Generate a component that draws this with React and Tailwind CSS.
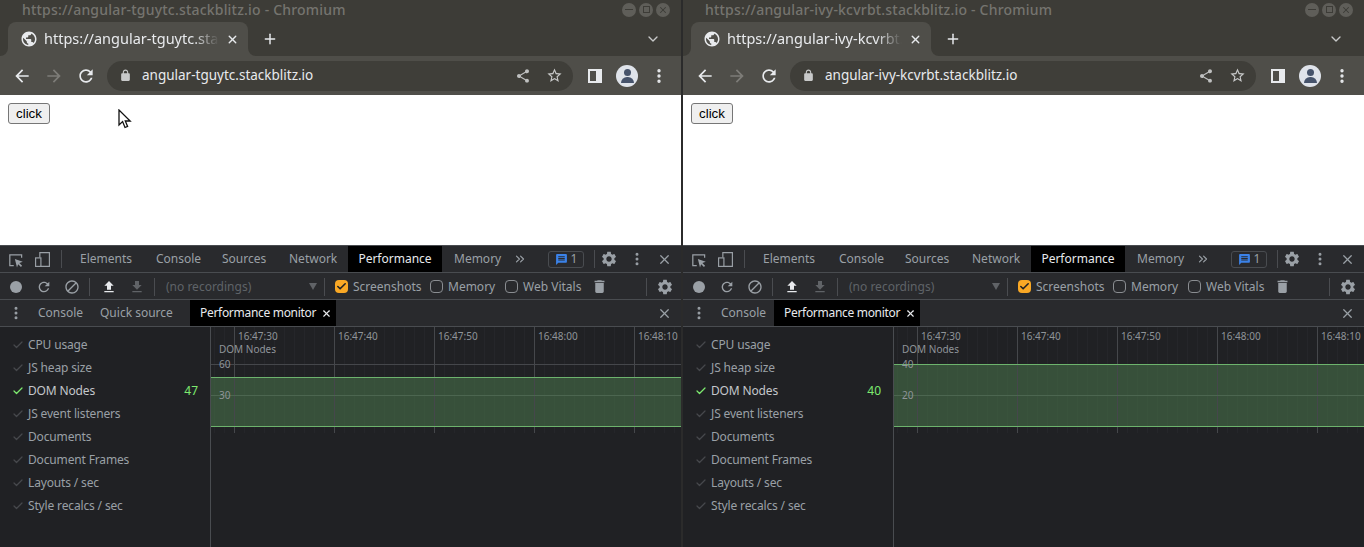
import { EllipsisVertical, X, Plus, ChevronDown, ChevronsRight, Check } from 'lucide-react'

const paths = {
  globe: 'M12 2C6.48 2 2 6.48 2 12s4.48 10 10 10 10-4.48 10-10S17.52 2 12 2zm-1 17.93c-3.95-.49-7-3.85-7-7.93 0-.62.08-1.21.21-1.79L9 15v1c0 1.1.9 2 2 2v1.93zm6.9-2.54c-.26-.81-1-1.39-1.9-1.39h-1v-3c0-.55-.45-1-1-1H8v-2h2c.55 0 1-.45 1-1V7h2c1.1 0 2-.9 2-2v-.41c2.93 1.19 5 4.06 5 7.41 0 2.08-.8 3.97-2.1 5.39z',
  back: 'M20 11H7.83l5.59-5.59L12 4l-8 8 8 8 1.41-1.41L7.83 13H20v-2z',
  forward: 'M4 11h12.17l-5.59-5.59L12 4l8 8-8 8-1.41-1.41L16.17 13H4v-2z',
  refresh: 'M17.65 6.35C16.2 4.9 14.21 4 12 4c-4.42 0-7.99 3.58-7.99 8s3.57 8 7.99 8c3.73 0 6.84-2.55 7.73-6h-2.08c-.82 2.33-3.04 4-5.65 4-3.31 0-6-2.69-6-6s2.69-6 6-6c1.66 0 3.14.69 4.22 1.78L13 11h7V4l-2.35 2.35z',
  lock: 'M18 8h-1V6c0-2.76-2.24-5-5-5S7 3.24 7 6v2H6c-1.1 0-2 .9-2 2v10c0 1.1.9 2 2 2h12c1.1 0 2-.9 2-2V10c0-1.1-.9-2-2-2zm-6-5c1.66 0 3 1.34 3 3v2H9V6c0-1.66 1.34-3 3-3z',
  share: 'M18 16.08c-.76 0-1.44.3-1.96.77L8.91 12.7c.05-.23.09-.46.09-.7s-.04-.47-.09-.7l7.05-4.11c.54.5 1.25.81 2.04.81 1.66 0 3-1.34 3-3s-1.34-3-3-3-3 1.34-3 3c0 .24.04.47.09.7L8.04 9.81C7.5 9.31 6.79 9 6 9c-1.66 0-3 1.34-3 3s1.34 3 3 3c.79 0 1.5-.31 2.04-.81l7.12 4.16c-.05.21-.08.43-.08.65 0 1.61 1.31 2.92 2.92 2.92 1.61 0 2.92-1.31 2.92-2.92s-1.31-2.92-2.92-2.92z',
  star: 'M22 9.24l-7.19-.62L12 2 9.19 8.63 2 9.24l5.46 4.73L5.82 21 12 17.27 18.18 21l-1.63-7.03L22 9.24zM12 15.4l-3.76 2.27 1-4.28-3.32-2.88 4.38-.38L12 6.1l1.71 4.04 4.38.38-3.32 2.88 1 4.28L12 15.4z',
  gear: 'M19.14 12.94c.04-.3.06-.61.06-.94 0-.32-.02-.64-.07-.94l2.03-1.58c.18-.14.23-.41.12-.61l-1.92-3.32c-.12-.22-.37-.29-.59-.22l-2.39.96c-.5-.38-1.03-.7-1.62-.94l-.36-2.54c-.04-.24-.24-.41-.48-.41h-3.84c-.24 0-.43.17-.47.41l-.36 2.54c-.59.24-1.13.57-1.62.94l-2.39-.96c-.22-.08-.47 0-.59.22L2.74 8.87c-.12.21-.08.47.12.61l2.03 1.58c-.05.3-.09.63-.09.94s.02.64.07.94l-2.03 1.58c-.18.14-.23.41-.12.61l1.92 3.32c.12.22.37.29.59.22l2.39-.96c.5.38 1.03.7 1.62.94l.36 2.54c.05.24.24.41.48.41h3.84c.24 0 .44-.17.47-.41l.36-2.54c.59-.24 1.13-.56 1.62-.94l2.39.96c.22.08.47 0 .59-.22l1.92-3.32c.12-.22.07-.47-.12-.61l-2.01-1.58zM12 15.6c-1.98 0-3.6-1.62-3.6-3.6s1.62-3.6 3.6-3.6 3.6 1.62 3.6 3.6-1.62 3.6-3.6 3.6z',
  block: 'M12 2C6.48 2 2 6.48 2 12s4.48 10 10 10 10-4.48 10-10S17.52 2 12 2zM4 12c0-4.42 3.58-8 8-8 1.85 0 3.55.63 4.9 1.69L5.69 16.9C4.63 15.55 4 13.85 4 12zm8 8c-1.85 0-3.55-.63-4.9-1.69L18.31 7.1C19.37 8.45 20 10.15 20 12c0 4.42-3.58 8-8 8z',
  trash: 'M6 19c0 1.1.9 2 2 2h8c1.1 0 2-.9 2-2V7H6v12zM19 4h-3.5l-1-1h-5l-1 1H5v2h14V4z',
  upload: 'M9 16h6v-6h4l-7-7-7 7h4zm-4 2h14v2H5z',
  download: 'M19 9h-4V3H9v6H5l7 7 7-7zM5 18v2h14v-2H5z',
  message: 'M20 2H4c-1.1 0-1.99.9-1.99 2L2 22l4-4h14c1.1 0 2-.9 2-2V4c0-1.1-.9-2-2-2zm-2 12H6v-2h12v2zm0-3H6V9h12v2zm0-3H6V6h12v2z',
}

function Icon({ name, className }) {
  return (
    <svg viewBox="0 0 24 24" fill="currentColor" className={className}>
      <path d={paths[name]} />
    </svg>
  )
}

function Inspect() {
  return (
    <svg viewBox="0 0 16 16" fill="none" className="w-[18px] h-[18px] text-[#9aa0a6]">
      <path d="M6 13H2.500V3.500H13V6" stroke="currentColor" strokeWidth="1.1" />
      <path d="M7 7l7 2.600-3 1.100 2.400 2.500-1 1-2.500-2.400-1 2.900z" fill="currentColor" />
    </svg>
  )
}

function Device() {
  return (
    <svg viewBox="0 0 16 16" fill="none" className="w-[17px] h-[17px] text-[#9aa0a6]">
      <path d="M5.500 6V1.500h9v13H6" stroke="currentColor" strokeWidth="1.1" />
      <rect x="1.500" y="6.500" width="5" height="8" stroke="currentColor" strokeWidth="1.1" />
    </svg>
  )
}

function Divider({ className }) {
  return <div className={'w-px h-[18px] bg-[#4a4c50] ' + className} />
}

function Box({ label, margin, checked }) {
  return (
    <div className={'flex items-center shrink-0 ' + margin}>
      {checked ? (
        <span className="w-[13px] h-[13px] rounded-sm bg-[#f9a825] flex items-center justify-center">
          <Check className="w-[11px] h-[11px] text-[#202124]" strokeWidth={3.5} />
        </span>
      ) : (
        <span className="w-[13px] h-[13px] rounded-sm border border-[#8a8d91]" />
      )}
      <span className="ml-[5px] text-[#9aa0a6]">{label}</span>
    </div>
  )
}

function Chart({ top, high, mid }) {
  const majors = [23, 123, 223, 323, 423]
  const minors = []
  for (let x = 3; x < 470; x += 10) minors.push(x)
  const times = ['16:47:30', '16:47:40', '16:47:50', '16:48:00', '16:48:10']
  return (
    <svg width="470" height="220" className="block" fontSize="10" fill="#8f9499">
      {minors.map((x) => (
        <line key={x} x1={x + 0.5} x2={x + 0.5} y1="0" y2="106" stroke="#25262a" />
      ))}
      <rect x="0" y={top} width="470" height={99 - top} fill="#37503a" />
      {minors.map((x) => (
        <line key={x} x1={x + 0.5} x2={x + 0.5} y1={top} y2="99" stroke="#39533c" />
      ))}
      {majors.map((x) => (
        <line key={x} x1={x + 0.5} x2={x + 0.5} y1="0" y2="106" stroke="#45474b" />
      ))}
      <line x1="0" x2="470" y1="37.500" y2="37.500" stroke="#45474b" />
      <line x1="0" x2="470" y1="68.500" y2="68.500" stroke="#4c6650" />
      <line x1="0" x2="470" y1={top + 0.5} y2={top + 0.5} stroke="#6db36d" />
      <line x1="0" x2="470" y1="99.500" y2="99.500" stroke="#6db36d" />
      {times.map((t, i) => (
        <text key={t} x={27 + i * 100} y="13">{t}</text>
      ))}
      <text x="8" y="26">DOM Nodes</text>
      <text x="8" y="41">{high}</text>
      <text x="8" y="72">{mid}</text>
    </svg>
  )
}

const metrics = ['CPU usage', 'JS heap size', 'DOM Nodes', 'JS event listeners', 'Documents', 'Document Frames', 'Layouts / sec', 'Style recalcs / sec']

function Browser({ url, quick, value, bandTop, high, mid, cursor }) {
  return (
    <div className="w-[681px] h-[547px] shrink-0 flex flex-col relative overflow-hidden font-['Noto_Sans',sans-serif]">
      <div className="h-[22px] bg-[#3d3c37] flex items-center pl-[22px] pr-[11px] justify-between">
        <span className="text-[14px] font-medium text-[#75746f] tracking-[0.2px] -mt-[3px]">https://{url} - Chromium</span>
        <div className="flex gap-[3px] -mt-[3px]">
          <span className="w-[14px] h-[14px] rounded-full bg-[#5f5e59] flex items-center justify-center"><span className="w-[8px] h-px bg-[#3d3c37]" /></span>
          <span className="w-[14px] h-[14px] rounded-full bg-[#5f5e59] flex items-center justify-center"><span className="w-[7px] h-[7px] border border-[#3d3c37]" /></span>
          <span className="w-[14px] h-[14px] rounded-full bg-[#5f5e59] flex items-center justify-center"><X className="w-[10px] h-[10px] text-[#3d3c37]" strokeWidth={2.5} /></span>
        </div>
      </div>
      <div className="h-[34px] bg-[#3d3c37] flex items-end">
        <svg viewBox="0 0 8 8" className="w-2 h-2 shrink-0 text-[#4f4e49]"><path d="M8 0v8H0a8 8 0 0 0 8-8z" fill="currentColor" /></svg>
        <div className="w-[240px] h-[34px] bg-[#4f4e49] rounded-t-lg flex items-center pl-[12px] pr-[9px]">
          <Icon name="globe" className="w-[18px] h-[18px] text-[#e8eaed] shrink-0" />
          <span className="ml-[6px] flex-1 overflow-hidden whitespace-nowrap text-[14.5px] text-[#e8eaed] [mask-image:linear-gradient(90deg,#000_85%,transparent)]">https://{url}</span>
          <X className="w-[13px] h-[13px] ml-[7px] text-[#e8eaed] shrink-0" strokeWidth={2.5} />
        </div>
        <svg viewBox="0 0 8 8" className="w-2 h-2 shrink-0 text-[#4f4e49]"><path d="M0 0v8h8a8 8 0 0 1-8-8z" fill="currentColor" /></svg>
        <Plus className="w-[16px] h-[16px] ml-[6px] mb-[9px] text-[#e8eaed]" strokeWidth={2.2} />
        <div className="flex-1" />
        <ChevronDown className="w-[16px] h-[16px] mr-[20px] mb-[9px] text-[#c8c9c9]" strokeWidth={2} />
      </div>
      <div className="h-[39px] bg-[#4f4e49] flex items-center">
        <Icon name="back" className="w-[20px] h-[20px] ml-[12px] text-[#e8eaed]" />
        <Icon name="forward" className="w-[20px] h-[20px] ml-[12px] text-[#7d7c78]" />
        <Icon name="refresh" className="w-[20px] h-[20px] ml-[12px] text-[#e8eaed]" />
        <div className="ml-[11px] w-[466px] h-[30px] rounded-full bg-[#3f3e39] flex items-center pl-[13px] pr-[10px]">
          <Icon name="lock" className="w-[13px] h-[13px] text-[#c8c9c9] ml-[-1px]" />
          <span className="ml-[10px] flex-1 text-[13.5px] text-[#e8eaed]">{url}</span>
          <Icon name="share" className="w-[16px] h-[16px] text-[#bfc0c0]" />
          <Icon name="star" className="w-[17px] h-[17px] ml-[15px] text-[#c8c9c9]" />
        </div>
        <span className="ml-[15px] w-[14px] h-[14px] border-[2px] border-r-[6px] border-[#e8eaed]" />
        <span className="ml-[14px] w-[22px] h-[22px] rounded-full bg-[#dfe3ea] flex flex-col items-center justify-center overflow-hidden">
          <span className="w-[7px] h-[7px] rounded-full bg-[#46536b]" />
          <span className="w-[13px] h-[6px] rounded-t-full bg-[#46536b] mt-px" />
        </span>
        <EllipsisVertical className="w-[18px] h-[18px] ml-[12px] text-[#e8eaed]" strokeWidth={2.5} />
      </div>
      <div className="h-[150px] bg-white">
        <button className="ml-2 mt-2 h-[21px] w-[42px] rounded-[3px] border border-[#767676] bg-[#efefef] font-['Liberation_Sans',sans-serif] text-[13.33px] text-black">click</button>
      </div>
      {cursor && (
        <svg viewBox="0 0 14 22" className="absolute left-[118px] top-[109px] w-[14px] h-[22px]">
          <path d="M1 1v15l3.600-3.400L7 18.500l2.600-1.100-2.300-5.400h4.900z" fill="#fff" stroke="#111" strokeWidth="1.3" />
        </svg>
      )}
      <div className="flex-1 flex flex-col bg-[#292a2d] text-[12px] text-[#9aa0a6] border-t border-[#494c50]">
        <div className="h-[27px] shrink-0 flex items-center border-b border-[#494c50] whitespace-nowrap">
          <div className="ml-[7px] mt-[1px]"><Inspect /></div>
          <div className="ml-[9px]"><Device /></div>
          <Divider className="ml-[10px]" />
          <span className="ml-[18px] w-[76px]">Elements</span>
          <span className="w-[66px]">Console</span>
          <span className="w-[67px]">Sources</span>
          <span className="w-[59px]">Network</span>
          <span className="w-[94px] h-[26px] bg-black text-[#e8eaed] flex items-center justify-center">Performance</span>
          <span className="ml-[12px] w-[59px]">Memory</span>
          <ChevronsRight className="w-[14px] h-[14px]" />
          <span className="ml-[21px] w-[36px] h-[17px] rounded-[3px] border border-[#494c50] flex items-center justify-center gap-[3px]">
            <Icon name="message" className="w-[13px] h-[13px] text-[#3b82e8]" />1
          </span>
          <Divider className="ml-[10px]" />
          <Icon name="gear" className="w-[18px] h-[18px] ml-[5px]" />
          <EllipsisVertical className="w-[16px] h-[16px] ml-[11px]" strokeWidth={2.5} />
          <X className="w-[15px] h-[15px] ml-[12px]" strokeWidth={2} />
        </div>
        <div className="h-[27px] shrink-0 flex items-center border-b border-[#494c50] whitespace-nowrap pt-px">
          <span className="ml-[10px] w-[12px] h-[12px] rounded-full bg-[#9aa0a6]" />
          <Icon name="refresh" className="w-[16px] h-[16px] ml-[14px]" />
          <Icon name="block" className="w-[16px] h-[16px] ml-[12px]" />
          <Divider className="ml-[9px]" />
          <Icon name="upload" className="w-[16px] h-[16px] ml-[11px] text-[#e8eaed]" />
          <Icon name="download" className="w-[16px] h-[16px] ml-[12px] text-[#606367]" />
          <Divider className="ml-[9px]" />
          <span className="ml-[11px] w-[143px] text-[#5f6368]">(no recordings)</span>
          <span className="w-0 h-0 border-x-[4px] border-x-transparent border-t-[7px] border-t-[#606367]" />
          <Divider className="ml-[7px]" />
          <Box label="Screenshots" margin="ml-[10px] w-[95px]" checked />
          <Box label="Memory" margin="w-[75px]" />
          <Box label="Web Vitals" margin="w-[87px]" />
          <Icon name="trash" className="w-[17px] h-[17px] ml-[-1px]" />
          <Divider className="ml-[38px]" />
          <Icon name="gear" className="w-[18px] h-[18px] ml-[9px]" />
        </div>
        <div className="h-[27px] shrink-0 flex items-center border-b border-[#494c50] whitespace-nowrap">
          <EllipsisVertical className="w-[16px] h-[16px] ml-[8px]" strokeWidth={2.5} />
          <span className="ml-[14px] w-[53px]">Console</span>
          {quick && <span className="w-[90px] ml-[9px]">Quick source</span>}
          <div className="h-[26px] w-[146px] bg-black text-[#e8eaed] flex items-center pl-[10px]">
            <span className="flex-1 tracking-[-0.3px]">Performance monitor</span>
            <X className="w-[11px] h-[11px] mr-[4px] text-[#e8eaed]" strokeWidth={2.5} />
          </div>
          <div className="flex-1" />
          <X className="w-[15px] h-[15px] mr-[9px]" strokeWidth={2} />
        </div>
        <div className="flex-1 flex bg-[#202124]">
          <div className="w-[211px] shrink-0 border-r border-[#494c50] pt-[6px]">
            {metrics.map((m) => (
              <div key={m} className={'h-[23px] flex items-center pl-[12px] pr-[12px] ' + (m === 'DOM Nodes' ? 'text-[#c4c7cb]' : 'text-[#9aa0a6]')}>
                <Check className={'w-[12px] h-[12px] ' + (m === 'DOM Nodes' ? 'text-[#7dea6f]' : 'text-[#46484c]')} strokeWidth={2.5} />
                <span className="ml-[4px] flex-1 tracking-[-0.15px]">{m}</span>
                {m === 'DOM Nodes' && <span className="text-[#7dea6f]">{value}</span>}
              </div>
            ))}
          </div>
          <Chart top={bandTop} high={high} mid={mid} />
        </div>
      </div>
    </div>
  )
}

export default function App() {
  return (
    <div className="w-[1364px] h-[547px] flex overflow-hidden bg-[#2b2b2b]">
      <Browser url="angular-tguytc.stackblitz.io" quick value="47" bandTop={50} high="60" mid="30" cursor />
      <div className="w-[2px] shrink-0 bg-[#2b2b2b]" />
      <Browser url="angular-ivy-kcvrbt.stackblitz.io" value="40" bandTop={37} high="40" mid="20" />
    </div>
  )
}
